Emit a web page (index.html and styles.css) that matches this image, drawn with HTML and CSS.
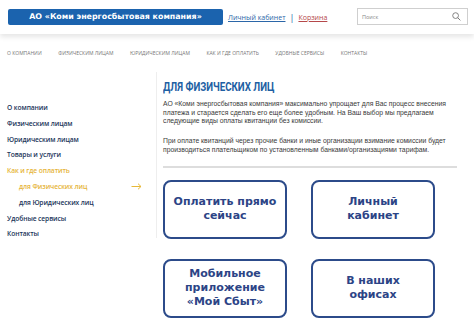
FILE: index.html
```html
<!DOCTYPE html>
<html lang="ru">
<head>
<meta charset="utf-8">
<title>Для физических лиц</title>
<link rel="stylesheet" href="styles.css">
</head>
<body>
<header class="top">
  <div class="brand">АО «Коми энергосбытовая компания»</div>
  <div class="links">
    <a class="lk" href="#">Личный кабинет</a>
    <span class="sep">|</span>
    <a class="cart" href="#">Корзина</a>
  </div>
  <div class="search">
    <span class="ph">Поиск</span>
    <svg class="mag" width="9" height="9" viewBox="0 0 10 10"><circle cx="4" cy="4" r="3.2" fill="none" stroke="#777" stroke-width="1"/><line x1="6.3" y1="6.3" x2="9.3" y2="9.3" stroke="#777" stroke-width="1.1"/></svg>
  </div>
</header>
<nav class="menu">
  <span>О компании</span>
  <span>Физическим лицам</span>
  <span>Юридическим лицам</span>
  <span>Как и где оплатить</span>
  <span>Удобные сервисы</span>
  <span>Контакты</span>
</nav>
<div class="main">
  <aside class="side">
    <div class="item">О компании</div>
    <div class="item">Физическим лицам</div>
    <div class="item">Юридическим лицам</div>
    <div class="item">Товары и услуги</div>
    <div class="item active">Как и где оплатить</div>
    <div class="item sub active">
      <span>для Физических лиц</span>
      <svg width="11" height="7" viewBox="0 0 11 7"><path d="M0.5 3.5H10M7 0.7L10 3.5L7 6.3" fill="none" stroke="#e7b93a" stroke-width="1"/></svg>
    </div>
    <div class="item sub">для Юридических лиц</div>
    <div class="item">Удобные сервисы</div>
    <div class="item">Контакты</div>
  </aside>
  <section class="content">
    <h1 class="title">Для физических лиц</h1>
    <p class="txt">АО «Коми энергосбытовая компания» максимально упрощает для Вас процесс внесения платежа и старается сделать его еще более удобным. На Ваш выбор мы предлагаем следующие виды оплаты квитанции без комиссии.</p>
    <p class="txt">При оплате квитанций через прочие банки и иные организации взимание комиссии будет производиться плательщиком по установленным банками/организациями тарифам.</p>
    <div class="rule"></div>
    <div class="btns">
      <div class="btn">Оплатить прямо<br>сейчас</div>
      <div class="btn">Личный<br>кабинет</div>
      <div class="btn">Мобильное<br>приложение<br>«Мой Сбыт»</div>
      <div class="btn">В наших<br>офисах</div>
    </div>
  </section>
</div>
</body>
</html>
```
FILE: styles.css
```css
html, body {
  margin: 0;
  padding: 0;
  background: #fff;
}
body {
  width: 474px;
  height: 327px;
  overflow: hidden;
  font-family: "Open Sans", "Liberation Sans", sans-serif;
}
.top {
  display: flex;
  align-items: center;
  height: 34px;
  padding: 0 6px 0 8px;
  box-sizing: border-box;
  box-shadow: 0 3px 5px rgba(0, 0, 0, 0.1);
  position: relative;
}
.brand {
  width: 215px;
  height: 16px;
  background: #1b63ae;
  border-radius: 2px;
  color: #fff;
  font-family: "DejaVu Sans", sans-serif;
  font-weight: bold;
  font-size: 7.9px;
  line-height: 16px;
  text-align: center;
  margin-top: -1px;
}
.links {
  margin-left: 5px;
  font-family: "Open Sans", sans-serif;
  font-size: 7px;
  display: flex;
  align-items: center;
  gap: 4px;
}
.lk {
  color: #2b66a8;
}
.sep {
  color: #2b66a8;
  font-size: 9px;
}
.cart {
  color: #b5484a;
}
.search {
  margin-left: auto;
  width: 111px;
  height: 17px;
  border: 1px solid #cfcfcf;
  box-sizing: border-box;
  display: flex;
  align-items: center;
  padding: 0 6px 0 4px;
  margin-top: -1px;
}
.ph {
  font-size: 5.5px;
  color: #888;
}
.mag {
  margin-left: auto;
}
.menu {
  display: flex;
  gap: 16.5px;
  height: 38px;
  align-items: center;
  padding-left: 7px;
  font-family: "Open Sans", sans-serif;
  font-size: 5px;
  text-transform: uppercase;
  color: #777;
}
.main {
  display: grid;
  grid-template-columns: 157px 1fr;
}
.side {
  padding-top: 28px;
  border-right: 1px solid #eeeeee;
  height: 138px;
  box-sizing: content-box;
}
.item {
  height: 15.8px;
  line-height: 15.8px;
  padding-left: 7px;
  font-size: 6.7px;
  font-weight: 600;
  color: #22355a;
  letter-spacing: -0.1px;
}
.item.active {
  color: #e6b53a;
}
.item.sub {
  padding-left: 19px;
  display: flex;
  align-items: center;
  justify-content: space-between;
  padding-right: 14px;
}
.content {
  padding-left: 6px;
  padding-top: 8px;
}
.title {
  margin: 0 0 6px 0;
  font-family: "Roboto", sans-serif;
  font-weight: bold;
  font-size: 12.5px;
  line-height: 14px;
  text-transform: uppercase;
  color: #1e5fa3;
  transform: scaleX(0.78);
  transform-origin: left center;
  white-space: nowrap;
}
.txt {
  margin: 0 0 11.5px 0;
  font-family: "Liberation Sans", Arial, sans-serif;
  font-size: 6.8px;
  line-height: 8.5px;
  color: #3a3a3a;
  width: 300px;
}
.rule {
  width: 294px;
  height: 2px;
  background: #dddddd;
  margin-top: 10px;
}
.btns {
  display: grid;
  grid-template-columns: 124px 124px;
  column-gap: 24px;
  row-gap: 20px;
  margin-top: 12px;
}
.btn {
  height: 59px;
  border: 2px solid #2c4b8a;
  border-radius: 8px;
  box-sizing: border-box;
  display: flex;
  align-items: center;
  justify-content: center;
  text-align: center;
  font-family: "DejaVu Sans", Verdana, sans-serif;
  font-weight: bold;
  font-size: 11px;
  line-height: 14px;
  color: #2c4486;
}
```
